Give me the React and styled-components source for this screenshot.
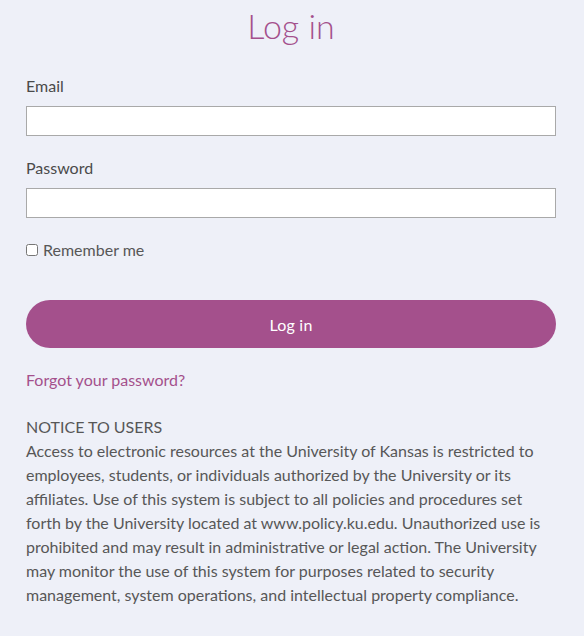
import React, { useState } from 'react';
import styled, { createGlobalStyle } from 'styled-components';

const COLORS = {
    page: '#eef0f8',
    plum: '#a4508c',
    text: '#575757',
    label: '#4a4a4a',
    border: '#a9a9a9',
};

const GlobalStyle = createGlobalStyle`
    html, body {
        margin: 0;
        padding: 0;
        background: ${COLORS.page};
    }
    body {
        font-family: Lato, "Noto Sans", sans-serif;
        color: ${COLORS.text};
    }
`;

const Page = styled.main`
    display: flex;
    flex-direction: column;
    padding: 6px 28px 20px 26px;
`;

const Title = styled.h1`
    margin: 0 0 28px;
    text-align: center;
    font-size: 34px;
    line-height: 40px;
    font-weight: 300;
    color: ${COLORS.plum};
`;

const Form = styled.form`
    display: flex;
    flex-direction: column;
`;

const Field = styled.div`
    display: flex;
    flex-direction: column;
    gap: 8px;
    margin-bottom: 20px;
`;

const Label = styled.label`
    font-size: 16px;
    line-height: 24px;
    color: ${COLORS.label};
`;

const TextInput = styled.input`
    box-sizing: border-box;
    width: 100%;
    height: 30px;
    margin: 0;
    padding: 4px 6px;
    border: 1px solid ${COLORS.border};
    border-radius: 0;
    background: #fff;
    font: inherit;
    font-size: 15px;
`;

const CheckRow = styled.label`
    display: flex;
    align-items: center;
    gap: 5px;
    font-size: 16px;
    line-height: 24px;
    color: ${COLORS.text};
    margin-bottom: 38px;
`;

const Check = styled.input`
    width: 12px;
    height: 12px;
    margin: 0;
    accent-color: ${COLORS.plum};
`;

const SubmitButton = styled.button`
    height: 48px;
    width: 100%;
    border: none;
    border-radius: 24px;
    background: ${COLORS.plum};
    color: #fff;
    font-family: inherit;
    font-size: 16px;
    letter-spacing: 0.2px;
    font-weight: 400;
    cursor: pointer;
`;

const ForgotLink = styled.a`
    align-self: flex-start;
    margin-top: 20px;
    font-size: 16px;
    line-height: 24px;
    color: ${COLORS.plum};
    text-decoration: none;
`;

const Notice = styled.section`
    margin-top: 23px;
    font-size: 16px;
    line-height: 24px;
    color: ${COLORS.text};
`;

const NoticeTitle = styled.div`
    text-transform: uppercase;
`;

const NoticeText = styled.p`
    margin: 0;
`;

const App = () => {
    const [email, setEmail] = useState('');
    const [password, setPassword] = useState('');
    const [remember, setRemember] = useState(false);

    return (
        <>
            <GlobalStyle />
            <Page>
                <Title>Log in</Title>
                <Form onSubmit={e => e.preventDefault()}>
                    <Field>
                        <Label htmlFor="email">Email</Label>
                        <TextInput
                            id="email"
                            type="email"
                            value={email}
                            onChange={e => setEmail(e.target.value)}
                        />
                    </Field>
                    <Field>
                        <Label htmlFor="password">Password</Label>
                        <TextInput
                            id="password"
                            type="password"
                            value={password}
                            onChange={e => setPassword(e.target.value)}
                        />
                    </Field>
                    <CheckRow>
                        <Check
                            type="checkbox"
                            checked={remember}
                            onChange={e => setRemember(e.target.checked)}
                        />
                        Remember me
                    </CheckRow>
                    <SubmitButton type="submit">Log in</SubmitButton>
                </Form>
                <ForgotLink href="#">Forgot your password?</ForgotLink>
                <Notice>
                    <NoticeTitle>Notice to users</NoticeTitle>
                    <NoticeText>
                        Access to electronic resources at the University of Kansas is restricted to
                        employees, students, or individuals authorized by the University or its
                        affiliates. Use of this system is subject to all policies and procedures set
                        forth by the University located at www.policy.ku.edu. Unauthorized use is
                        prohibited and may result in administrative or legal action. The University
                        may monitor the use of this system for purposes related to security
                        management, system operations, and intellectual property compliance.
                    </NoticeText>
                </Notice>
            </Page>
        </>
    );
};

export default App;
